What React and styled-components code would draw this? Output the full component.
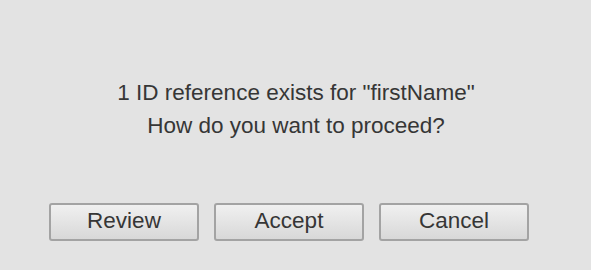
import React from 'react'
import styled, { createGlobalStyle } from 'styled-components'

const GlobalStyle = createGlobalStyle`
  html, body {
    margin: 0;
    padding: 0;
    background: #e3e3e3;
  }
  body {
    font-family: "Liberation Sans", Arial, sans-serif;
    color: #333;
  }
`

const Dialog = styled.div`
  width: 591px;
  height: 270px;
  display: flex;
  flex-direction: column;
  background: #e3e3e3;
  box-sizing: border-box;
  padding-top: 76px;
`

const Message = styled.div`
  text-align: center;
  font-size: 22.5px;
  line-height: 33px;
  color: #363636;
  padding-left: 1px;
`

const ButtonRow = styled.div`
  display: flex;
  gap: 15px;
  padding-left: 49px;
  margin-top: 61px;
`

const Button = styled.button`
  width: 150px;
  height: 38px;
  box-sizing: border-box;
  border: 2px solid #a3a3a3;
  border-radius: 3px;
  background: linear-gradient(to bottom, #f0f0f0 0%, #e4e4e4 50%, #d8d8d8 100%);
  font-family: "Liberation Sans", Arial, sans-serif;
  font-size: 22.5px;
  color: #363636;
  padding: 0 0 2px;
  cursor: pointer;
`

export default function App() {
  const buttons = ['Review', 'Accept', 'Cancel']
  return (
    <>
      <GlobalStyle />
      <Dialog>
        <Message>
          1 ID reference exists for "firstName"
          <br />
          How do you want to proceed?
        </Message>
        <ButtonRow>
          {buttons.map(label => (
            <Button key={label} type="button">{label}</Button>
          ))}
        </ButtonRow>
      </Dialog>
    </>
  )
}
